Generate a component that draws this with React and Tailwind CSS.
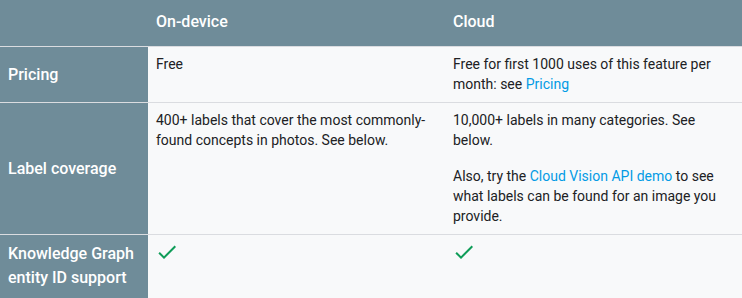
import React from "react";

const Check = () => (
  <svg width="24" height="24" viewBox="0 0 24 24" className="block">
    <path d="M9 16.17L4.83 12l-1.42 1.41L9 19 21 7l-1.41-1.41z" fill="#0f9d58" />
  </svg>
);

const Link = ({ children }) => <span className="text-[#039be5]">{children}</span>;

export default function App() {
  const label = "bg-[#6f8c99] text-white font-medium text-[16px] leading-6 px-2 flex items-center border-b border-[#dadce0]";
  const cell = "bg-[#f8f9fa] text-[#202124] text-[14px] leading-5 px-2 pt-[7px] pb-2 border-b border-[#dadce0]";
  const head = "bg-[#6f8c99] h-[47px] border-b border-[#dadce0] px-2 pt-[10px] text-white font-medium text-[16px] leading-6";
  return (
    <div className="w-[742px] h-[298px] overflow-hidden bg-[#f8f9fa]" style={{ fontFamily: "Roboto, 'Noto Sans', sans-serif" }}>
      <div className="grid grid-cols-[148px_297px_1fr]">
        <div className="bg-[#6f8c99] h-[47px] border-b border-[#dadce0]"></div>
        <div className={head}>On-device</div>
        <div className={head}>Cloud</div>

        <div className={label}>Pricing</div>
        <div className={cell}>Free</div>
        <div className={cell}>
          Free for first 1000 uses of this feature per month: see <Link>Pricing</Link>
        </div>

        <div className={label}>Label coverage</div>
        <div className={cell}>400+ labels that cover the most commonly-found concepts in photos. See below.</div>
        <div className={cell}>
          <p>10,000+ labels in many categories. See below.</p>
          <p className="mt-4">
            Also, try the <Link>Cloud Vision API demo</Link> to see what labels can be found for an image you provide.
          </p>
        </div>

        <div className="bg-[#6f8c99] text-white font-medium text-[16px] leading-6 px-2 pt-[7px] pb-2 border-b border-[#dadce0]">Knowledge Graph entity ID support</div>
        <div className={cell + " !pt-[5px] !pl-[7px]"}><Check /></div>
        <div className={cell + " !pt-[5px] !pl-[7px]"}><Check /></div>
      </div>
    </div>
  );
}
